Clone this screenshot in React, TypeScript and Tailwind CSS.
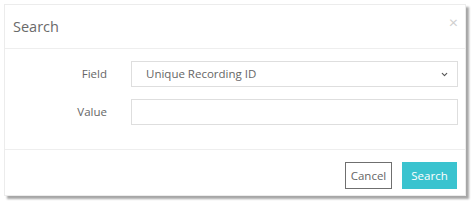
import { ChevronDown } from "lucide-react";

export default function App() {
  return (
    <div className="h-[207px] w-[474px] bg-white pl-[4px] pt-[4px] font-['Open_Sans',sans-serif]">
      <div className="flex h-[192px] w-[462px] flex-col border border-[#ececec] bg-white shadow-[3px_3px_2px_rgba(0,0,0,0.35)]">
        <div className="relative flex h-[44px] items-center border-b border-[#eeeeee] pl-[8px]">
          <span className="text-[14.5px] text-[#6a6a6a]">Search</span>
          <span className="absolute right-[7px] top-[9px] font-['Lato',sans-serif] text-[16px] leading-none text-[#cfcfcf]">×</span>
        </div>
        <div className="flex flex-1 flex-col gap-[12px] border-b border-[#eeeeee] pt-[12px]">
          <div className="flex items-center">
            <label className="w-[102px] text-right text-[11.5px] text-[#666]">Field</label>
            <div className="ml-[24px] flex h-[26px] w-[327px] items-center justify-between border border-[#dedede] pl-[14px] pr-[8px]">
              <span className="text-[11.5px] text-[#666]">Unique Recording ID</span>
              <ChevronDown className="h-[9px] w-[9px] text-[#555]" strokeWidth={3} />
            </div>
          </div>
          <div className="flex items-center">
            <label className="w-[102px] text-right text-[11.5px] text-[#666]">Value</label>
            <div className="ml-[24px] h-[26px] w-[327px] border border-[#dedede]" />
          </div>
        </div>
        <div className="flex h-[45px] items-start justify-end gap-[10px] pr-[8px] pt-[12px]">
          <button className="h-[27px] w-[47px] border border-[#6f6f6f] text-[11.5px] text-[#666]">Cancel</button>
          <button className="h-[27px] w-[55px] bg-[#3ac3cf] text-[11.5px] text-white">Search</button>
        </div>
      </div>
    </div>
  );
}
